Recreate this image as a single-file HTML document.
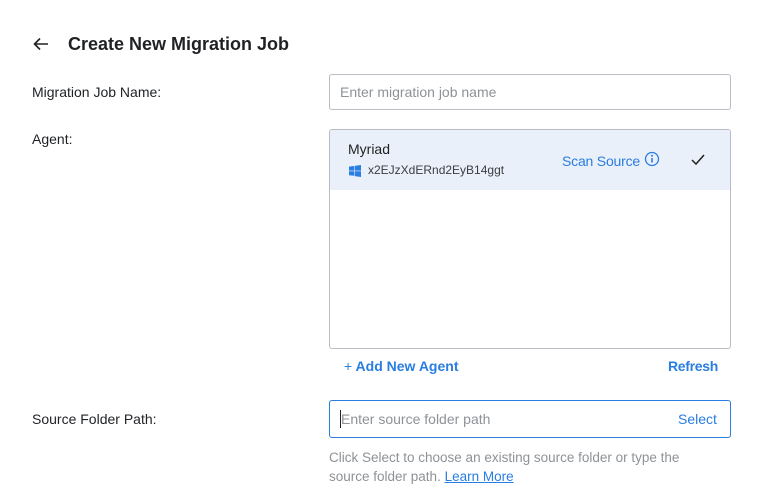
<!DOCTYPE html>
<html><head><meta charset="utf-8"><style>
body{margin:0;width:765px;height:501px;background:#fff;font-family:"Liberation Sans",sans-serif;color:#1f2124;position:relative;overflow:hidden}
.a{position:absolute}
.lbl{font-size:14px;color:#1f2124}
.blue{color:#2a7de1}
</style></head><body>
<svg class="a" style="left:33px;top:37px" width="16" height="14" viewBox="0 0 16 14"><path d="M15 7H2M7 1.5L1.5 7 7 12.5" fill="none" stroke="#222" stroke-width="1.6"/></svg>
<div class="a" style="left:68px;top:34px;font-size:18px;font-weight:bold">Create New Migration Job</div>
<div class="a lbl" style="left:32px;top:84px">Migration Job Name:</div>
<div class="a" style="left:329px;top:74px;width:400px;height:34px;border:1px solid #b9bdc3;border-radius:3px"></div>
<div class="a" style="left:340px;top:84px;font-size:14px;color:#8e9297">Enter migration job name</div>
<div class="a lbl" style="left:32px;top:131px">Agent:</div>
<div class="a" style="left:329px;top:129px;width:400px;height:218px;border:1px solid #b9bdc3;border-radius:3px;overflow:hidden">
 <div style="height:60px;background:#eaf0f9;position:relative">
  <div class="a" style="left:18px;top:11px;font-size:14px">Myriad</div>
  <svg class="a" style="left:19px;top:35px" width="12" height="12" viewBox="0 0 12 12"><path fill="#2a7de1" d="M0 1.6L5 1v4.6H0zM5.6 0.9L12 0v5.6H5.6zM0 6.2h5v4.6L0 10.2zM5.6 6.2H12V12l-6.4-.9z"/></svg>
  <div class="a" style="left:38px;top:33px;font-size:12px;color:#3a3d41">x2EJzXdERnd2EyB14ggt</div>
  <div class="a blue" style="left:232px;top:23px;font-size:14px;letter-spacing:-0.2px">Scan Source</div>
  <svg class="a" style="left:314px;top:21px" width="16" height="16" viewBox="0 0 16 16"><circle cx="8" cy="8" r="6.5" fill="none" stroke="#2a7de1" stroke-width="1.3"/><path d="M8 7v4.5" stroke="#2a7de1" stroke-width="1.6"/><circle cx="8" cy="4.8" r="1" fill="#2a7de1"/></svg>
  <svg class="a" style="left:361px;top:24px" width="14" height="12" viewBox="0 0 14 12"><path d="M1 6l4 4 8-9" fill="none" stroke="#222" stroke-width="1.5"/></svg>
 </div>
</div>
<div class="a blue" style="left:344px;top:358px;font-size:14px;font-weight:bold"><span style="font-weight:normal">+</span> Add New Agent</div>
<div class="a blue" style="left:668px;top:358px;font-size:14px;font-weight:bold;letter-spacing:-0.3px">Refresh</div>
<div class="a lbl" style="left:32px;top:411px">Source Folder Path:</div>
<div class="a" style="left:329px;top:400px;width:400px;height:36px;border:1px solid #2a7de1;border-radius:3px"></div>
<div class="a" style="left:340px;top:410px;width:1px;height:18px;background:#222"></div>
<div class="a" style="left:341px;top:411px;font-size:14px;color:#8e9297">Enter source folder path</div>
<div class="a blue" style="left:678px;top:411px;font-size:14px">Select</div>
<div class="a" style="left:329px;top:448px;font-size:13.5px;color:#8e9297;line-height:19px;width:380px">Click Select to choose an existing source folder or type the source folder path. <span class="blue" style="text-decoration:underline">Learn More</span></div>
</body></html>
